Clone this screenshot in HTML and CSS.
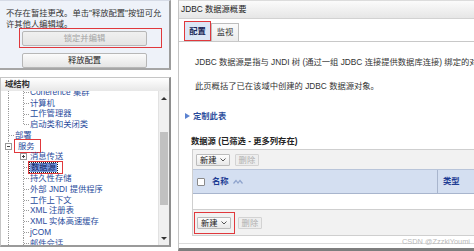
FILE: index.html
```html
<!DOCTYPE html>
<html lang="zh">
<head>
  <meta charset="UTF-8">
  <title>JDBC 数据源概要</title>
  <link rel="stylesheet" href="styles.css">
</head>
<body>
<div class="page">

  <!-- 左侧：更改中心 + 域结构 -->
  <aside class="side">
    <section class="change-box">
      <p class="change-note">不存在暂挂更改。单击"释放配置"按钮可允<br>许其他人编辑域。</p>
      <div class="mark mark-lock">
        <button class="btn btn-wide" disabled>锁定并编辑</button>
      </div>
      <button class="btn btn-wide btn-release">释放配置</button>
    </section>

    <section class="tree-box">
      <h2 class="box-title">域结构</h2>
      <div class="tree-body">
        <div class="tree">
          <div class="row l2">Coherence 集群</div>
          <div class="row l2">计算机</div>
          <div class="row l2">工作管理器</div>
          <div class="row l2 last">启动类和关闭类</div>
          <div class="row l1">部署</div>
          <div class="row l1 open"><i class="expander minus"></i><span class="mark mark-node">服务</span></div>
          <div class="row l2 sub"><i class="expander plus"></i><span>消息传送</span></div>
          <div class="row l2 picked"><span class="mark mark-sel"><span class="selected">数据源</span></span></div>
          <div class="row l2">持久性存储</div>
          <div class="row l2">外部 JNDI 提供程序</div>
          <div class="row l2">工作上下文</div>
          <div class="row l2">XML 注册表</div>
          <div class="row l2">XML 实体高速缓存</div>
          <div class="row l2">jCOM</div>
          <div class="row l2">邮件会话</div>
        </div>
        <div class="scrollbar">
          <span class="sb-arrow"><i class="tri-up"></i></span>
          <span class="sb-track"><i class="sb-thumb"></i></span>
          <span class="sb-arrow"><i class="tri-down"></i></span>
        </div>
      </div>
    </section>
  </aside>

  <!-- 右侧：JDBC 数据源概要 -->
  <main class="panel">
    <h1 class="panel-title">JDBC 数据源概要</h1>
    <nav class="tabs">
      <span class="tab tab-active">配置</span>
      <span class="tab">监视</span>
    </nav>

    <div class="content">
      <p class="intro">JDBC 数据源是指与 JNDI 树 (通过一组 JDBC 连接提供数据库连接) 绑定的对象。</p>
      <p class="intro intro-2">此页概括了已在该域中创建的 JDBC 数据源对象。</p>

      <a class="customize"><i class="tri-right"></i>定制此表</a>
      <h3 class="table-title">数据源 (已筛选 - 更多列存在)</h3>

      <div class="table-box">
        <div class="toolbar">
          <button class="tb-btn">新建 <svg class="caret" width="6" height="4" viewBox="0 0 6 4"><polyline points="0.5,0.5 3,3 5.5,0.5" fill="none" stroke="#555" stroke-width="1"/></svg></button>
          <button class="tb-btn" disabled>删除</button>
        </div>
        <div class="thead">
          <span class="cell cell-check"><i class="checkbox"></i></span>
          <span class="cell cell-name">名称<svg class="sort" width="10" height="6" viewBox="0 0 10 6"><polyline points="0.5,4.5 3,1.5 5,4 7,1.5 9.5,4.5" fill="none" stroke="#8ea3cc" stroke-width="1.2"/></svg></span>
          <span class="cell cell-type">类型</span>
        </div>
        <div class="trow"></div>
        <div class="toolbar toolbar-bottom">
          <span class="mark mark-new">
            <button class="tb-btn">新建 <svg class="caret" width="6" height="4" viewBox="0 0 6 4"><polyline points="0.5,0.5 3,3 5.5,0.5" fill="none" stroke="#555" stroke-width="1"/></svg></button>
          </span>
          <button class="tb-btn" disabled>删除</button>
        </div>
      </div>
    </div>
  </main>

  <div class="watermark">CSDN @ZzzkiYoumi</div>
</div>
</body>
</html>
```

FILE: styles.css
```css
:root {
  --vd: repeating-linear-gradient(to bottom, #9a9a9a 0 1px, transparent 1px 2px);
  --hd: repeating-linear-gradient(to right, #9a9a9a 0 1px, transparent 1px 2px);
  --red: #e0383c;
  --link: #2a4c9c;
}

body {
  margin: 0;
  width: 474px;
  height: 251px;
  overflow: hidden;
  font-family: "Liberation Sans", "Noto Sans CJK SC", sans-serif;
  font-size: 8.3px;
  line-height: 11px;
  color: #333;
  background: #fff;
}

.page {
  position: relative;
  display: flex;
  gap: 7px;
  height: 251px;
}

p, h1, h2, h3 {
  margin: 0;
  font-size: inherit;
}

button {
  font-family: inherit;
  font-size: 8.3px;
  padding: 0;
  cursor: pointer;
}

.mark {
  border: 1px solid var(--red);
}

/* ---------- 左侧 ---------- */

.side {
  width: 171px;
  flex-shrink: 0;
}

.change-box {
  box-sizing: border-box;
  height: 70px;
  padding: 7px 0 0 6px;
  background: #eef2f9;
  border-top: 1px solid #d6dbe6;
  border-right: 2px solid #9c9c9c;
  border-bottom: 2px solid #a6a6a6;
}

.change-note {
  color: #333;
  white-space: nowrap;
}

.mark-lock {
  box-sizing: border-box;
  width: 143px;
  height: 20px;
  margin: -2px 0 0 13px;
  padding: 2px 0 0 2px;
}

.btn {
  display: block;
  box-sizing: border-box;
  height: 15px;
  line-height: 13px;
  border: 1px solid #b7b7b7;
  border-radius: 2px;
  background: linear-gradient(#fbfbfb, #e5e5e5);
  color: #222;
}

.btn-wide {
  width: 125px;
}

.btn:disabled {
  color: #a3a3a3;
  background: linear-gradient(#f0f0f0, #e4e4e4);
}

.btn-release {
  margin: 5px 0 0 16px;
}

.tree-box {
  box-sizing: border-box;
  height: 170px;
  margin-top: 7px;
  border: 1px solid #c6c6c6;
  border-right: 2px solid #8e8e8e;
  border-bottom: 2px solid #9a9a9a;
  display: flex;
  flex-direction: column;
}

.box-title {
  height: 13px;
  line-height: 13px;
  padding-left: 4px;
  font-weight: bold;
  color: #333;
  background: linear-gradient(#ffffff, #e7e7e7);
}

.tree-body {
  flex: 1;
  display: flex;
  overflow: hidden;
}

.tree {
  flex: 1;
  margin-top: -4px;
}

.row {
  display: flex;
  align-items: center;
  height: 10.77px;
  white-space: nowrap;
  color: var(--link);
  background-repeat: no-repeat;
}

.l1 {
  padding-left: 14px;
  background-image: var(--vd), var(--hd);
  background-position: 7px 0, 8px 5px;
  background-size: 1px 100%, 6px 1px;
}

.l1.open {
  padding-left: 4px;
  background-image: var(--vd);
  background-size: 1px 100%;
}

.l2 {
  padding-left: 29px;
  background-image: var(--vd), var(--vd), var(--hd);
  background-position: 7px 0, 22px 0, 23px 5px;
  background-size: 1px 100%, 1px 100%, 6px 1px;
}

.l2.last {
  background-size: 1px 100%, 1px 50%, 6px 1px;
}

.l2.sub {
  padding-left: 19px;
  background-image: var(--vd), var(--vd);
  background-position: 7px 0, 22px 100%;
  background-size: 1px 100%, 1px 50%;
}

.l2.picked {
  padding-left: 27px;
}

.expander {
  position: relative;
  box-sizing: border-box;
  width: 7px;
  height: 7px;
  border: 1px solid #9a9a9a;
  background: #fff;
  flex-shrink: 0;
}

.expander::before,
.plus::after {
  content: "";
  position: absolute;
  left: 1px;
  top: 2px;
  width: 3px;
  height: 1px;
  background: #444;
}

.plus::after {
  left: 2px;
  top: 1px;
  width: 1px;
  height: 3px;
}

.minus {
  margin-right: 2px;
}

.plus {
  margin-right: 3px;
}

.mark-node {
  line-height: 9px;
  padding: 2px 5px 1px 3px;
}

.mark-sel {
  line-height: 9px;
  padding: 1px 5px 1px 1px;
}

.selected {
  display: inline-block;
  padding: 0 1px;
  background: #7b9be0;
  color: #0c1d62;
  outline: 1px dotted #1a1a1a;
}

.scrollbar {
  width: 10px;
  flex-shrink: 0;
  display: flex;
  flex-direction: column;
  background: #f0f0f0;
  border-left: 1px solid #e2e2e2;
}

.sb-arrow {
  height: 14px;
  display: flex;
  align-items: center;
  justify-content: center;
}

.sb-track {
  flex: 1;
  padding-top: 27px;
}

.sb-thumb {
  display: block;
  height: 73px;
  margin: 0 1px;
  background: #c1c1c1;
}

.tri-up,
.tri-down {
  width: 0;
  height: 0;
  border-left: 3px solid transparent;
  border-right: 3px solid transparent;
}

.tri-up {
  border-bottom: 3px solid #333;
}

.tri-down {
  border-top: 3px solid #333;
}

/* ---------- 右侧 ---------- */

.panel {
  flex: 1;
  min-width: 0;
  height: 251px;
  box-sizing: border-box;
  display: flex;
  flex-direction: column;
  border-left: 1px solid #c4c4c4;
  border-bottom: 3px solid #7e7e7e;
  overflow: hidden;
  white-space: nowrap;
}

.panel-title {
  height: 17px;
  line-height: 17px;
  padding-left: 2px;
  font-weight: normal;
  color: #222;
  background: linear-gradient(#fbfbfb, #e6e6e6);
  border-top: 1px solid #dcdcdc;
  border-bottom: 1px solid #d2d2d2;
}

.tabs {
  display: flex;
  align-items: flex-end;
  height: 22px;
  padding-left: 5px;
  border-bottom: 1px solid #c8c8c8;
}

.tab {
  box-sizing: border-box;
  width: 28px;
  height: 18px;
  line-height: 16px;
  text-align: center;
  color: #333;
  border: 1px solid #bdbdbd;
  border-bottom: none;
  background: linear-gradient(#fafafa, #ececec);
}

.tab-active {
  width: 27px;
  height: 20px;
  line-height: 18px;
  font-weight: bold;
  color: #1c2b5a;
  border: 1px solid var(--red);
  background: #dce7f6;
}

.content {
  flex: 1;
  margin-bottom: 4px;
  padding-left: 6px;
  border-bottom: 1px solid #dcdcdc;
}

.intro {
  margin-top: 15px;
  padding-left: 10px;
  color: #333;
}

.intro-2 {
  margin-top: 12.5px;
}

.customize {
  display: flex;
  align-items: center;
  gap: 3px;
  margin-top: 19px;
  font-weight: bold;
  color: var(--link);
}

.tri-right {
  width: 0;
  height: 0;
  border-top: 3px solid transparent;
  border-bottom: 3px solid transparent;
  border-left: 5px solid #5b82d0;
}

.table-title {
  margin-top: 14px;
  padding-left: 6px;
  font-weight: bold;
  color: #222;
}

.table-box {
  width: 300px;
  margin: 2.5px 0 0 7px;
  border: 1px solid #cfcfcf;
}

.toolbar {
  display: flex;
  align-items: center;
  gap: 5px;
  height: 19px;
  padding-left: 3px;
  background: #f2f2f2;
}

.tb-btn {
  display: flex;
  align-items: center;
  gap: 3px;
  height: 12px;
  padding: 0 3px;
  line-height: 10px;
  border: 1px solid #bcbcbc;
  border-radius: 1px;
  background: linear-gradient(#fdfdfd, #e8e8e8);
  color: #222;
}

.tb-btn:disabled {
  color: #b0b0b0;
  background: #eeeeee;
  border-color: #d3d3d3;
}

.toolbar-bottom {
  height: 25px;
  padding-left: 1px;
  gap: 3px;
  border-top: 1px solid #cfcfcf;
}

.mark-new {
  display: flex;
  align-items: center;
  height: 20px;
  padding: 0 3px 0 2px;
}

.thead {
  display: grid;
  grid-template-columns: 15px 229px 1fr;
  height: 23px;
  background: #d4dff1;
  border-top: 1px solid #b9c5da;
  border-bottom: 1px solid #a8b5cd;
}

.cell {
  display: flex;
  align-items: center;
  gap: 4px;
  font-weight: bold;
  color: #1f3d94;
}

.cell-check {
  justify-content: center;
}

.checkbox {
  box-sizing: border-box;
  width: 8px;
  height: 8px;
  border: 1px solid #8a8a8a;
  border-radius: 1px;
  background: #fff;
}

.cell-name {
  padding-left: 4px;
}

.cell-type {
  padding-left: 5px;
  border-left: 1px solid #a8b5cd;
}

.trow {
  height: 15px;
  background: #fff;
}

.watermark {
  position: absolute;
  right: 4px;
  bottom: 5px;
  font-size: 7.4px;
  line-height: 9px;
  color: #b9b9b9;
}
```
